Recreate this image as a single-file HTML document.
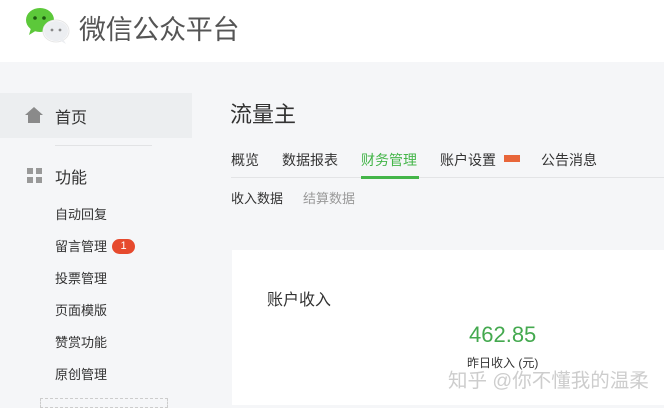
<!DOCTYPE html>
<html><head><meta charset="utf-8"><style>
*{margin:0;padding:0;box-sizing:border-box}
body{width:664px;height:405px;overflow:hidden;background:#f5f6f8;font-family:"Liberation Sans","Noto Sans CJK SC",sans-serif;position:relative;color:#333}
.a{position:absolute;white-space:nowrap}
</style></head><body>
<div class="a" style="left:0;top:0;width:664px;height:62px;background:#fff"></div>
<svg class="a" style="left:24px;top:6px" width="48" height="40" viewBox="0 0 48 40">
<ellipse cx="16" cy="14" rx="14" ry="12" fill="#5cc83a"/>
<path d="M7 22 L5 29 L13 24Z" fill="#5cc83a"/>
<ellipse cx="32" cy="25" rx="13" ry="11" fill="#fff" stroke="#e6e6e6"/>
<ellipse cx="32" cy="25" rx="12" ry="10" fill="#eceef1"/>
<path d="M39 33 L42 38 L35 34Z" fill="#eceef1"/>
<circle cx="11" cy="12" r="1.8" fill="#1d5a10"/><circle cx="20" cy="12" r="1.8" fill="#1d5a10"/>
<circle cx="28" cy="24" r="1.4" fill="#888"/><circle cx="36" cy="24" r="1.4" fill="#888"/>
</svg>
<div class="a" style="left:79px;top:8px;font-size:27px;color:#555;letter-spacing:-0.3px">微信公众平台</div>
<div class="a" style="left:0;top:93px;width:192px;height:45px;background:#eceef0"></div>
<svg class="a" style="left:25px;top:107px" width="18" height="16" viewBox="0 0 18 16"><path d="M9 0 L18 8 L15 8 L15 16 L3 16 L3 8 L0 8Z" fill="#8a8a8a"/></svg>
<div class="a" style="left:55px;top:104px;font-size:16px;color:#333">首页</div>
<div class="a" style="left:55px;top:145px;width:97px;height:1px;background:#e2e3e5"></div>
<svg class="a" style="left:27px;top:168px" width="15" height="15"><rect x="0" y="0" width="6" height="6" fill="#999"/><rect x="9" y="0" width="6" height="6" fill="#999"/><rect x="0" y="9" width="6" height="6" fill="#999"/><rect x="9" y="9" width="6" height="6" fill="#999"/></svg>
<div class="a" style="left:55px;top:164px;font-size:16px;color:#333">功能</div>
<div class="a" style="left:55px;top:205px;font-size:13px;line-height:20px;color:#333">自动回复<br><span style="display:inline-block;margin-top:12px">留言管理</span><br><span style="display:inline-block;margin-top:12px">投票管理</span><br><span style="display:inline-block;margin-top:12px">页面模版</span><br><span style="display:inline-block;margin-top:12px">赞赏功能</span><br><span style="display:inline-block;margin-top:12px">原创管理</span></div>
<div class="a" style="left:112px;top:239px;width:23px;height:15px;border-radius:8px;background:#e64a2e;color:#fff;font-size:11px;text-align:center;line-height:15px">1</div>
<div class="a" style="left:40px;top:398px;width:128px;height:10px;border:1px dashed #ccc"></div>
<div class="a" style="left:230px;top:97px;font-size:22px;color:#333">流量主</div>
<div class="a" style="left:231px;top:150px;font-size:14px;color:#333">概览</div>
<div class="a" style="left:282px;top:150px;font-size:14px;color:#333">数据报表</div>
<div class="a" style="left:361px;top:150px;font-size:14px;color:#44b549">财务管理</div>
<div class="a" style="left:440px;top:150px;font-size:14px;color:#333">账户设置</div>
<div class="a" style="left:504px;top:155px;width:16px;height:7px;background:#e8663a"></div>
<div class="a" style="left:541px;top:150px;font-size:14px;color:#333">公告消息</div>
<div class="a" style="left:231px;top:177px;width:433px;height:1px;background:#e3e4e6"></div>
<div class="a" style="left:361px;top:176px;width:58px;height:3px;background:#44b549"></div>
<div class="a" style="left:231px;top:188px;font-size:13px;color:#333">收入数据</div>
<div class="a" style="left:303px;top:188px;font-size:13px;color:#999">结算数据</div>
<div class="a" style="left:232px;top:250px;width:432px;height:155px;background:#fff"></div>
<div class="a" style="left:267px;top:286px;font-size:16px;color:#333">账户收入</div>
<div class="a" style="left:469px;top:322px;font-size:22px;color:#44a94f">462.85</div>
<div class="a" style="left:467px;top:354px;font-size:12px;color:#333">昨日收入 (元)</div>
<div class="a" style="left:448px;top:364px;font-size:19.5px;color:rgba(200,200,200,0.9)">知乎 @你不懂我的温柔</div>
</body></html>
